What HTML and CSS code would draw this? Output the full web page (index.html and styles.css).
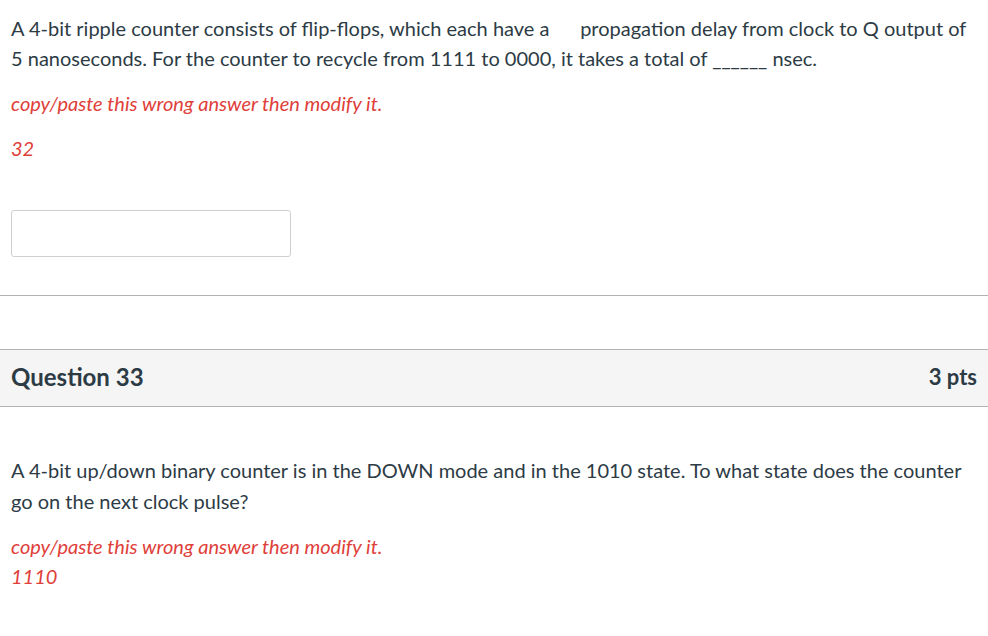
FILE: index.html
```html
<!DOCTYPE html>
<html>
<head>
<meta charset="utf-8">
<link rel="stylesheet" href="styles.css">
</head>
<body>
<div class="q-body first">
  <p class="text">A 4-bit ripple counter consists of flip-flops, which each have a&nbsp;&nbsp;&nbsp;&nbsp;&nbsp; propagation delay from clock to Q output of 5 nanoseconds. For the counter to recycle from 1111 to 0000, it takes a total of ______ nsec.</p>
  <p class="red">copy/paste this wrong answer then modify it.</p>
  <p class="red">32</p>
  <div class="answer-box"></div>
</div>
<div class="divider"></div>
<div class="q-header">
  <span class="q-title">Question 33</span>
  <span class="q-pts">3 pts</span>
</div>
<div class="q-body second">
  <p class="text">A 4-bit up/down binary counter is in the DOWN mode and in the 1010 state. To what state does the counter go on the next clock pulse?</p>
  <p class="red tight">copy/paste this wrong answer then modify it.<br>1110</p>
</div>
</body>
</html>
```

FILE: styles.css
```css
html, body {
  margin: 0;
  padding: 0;
  background: #fff;
}
body {
  font-family: Lato, "Open Sans", sans-serif;
  font-size: 20px;
  color: #2d3b45;
  width: 988px;
}
.q-body {
  padding: 0 11px;
}
.q-body.first {
  padding-top: 13px;
}
.text {
  margin: 0;
  line-height: 30px;
}
.red {
  margin: 15px 0 0;
  line-height: 30px;
  color: #e0403a;
  font-style: italic;
}
.answer-box {
  margin-top: 47px;
  width: 278px;
  height: 45px;
  border: 1px solid #cfcfcf;
  border-radius: 3px;
}
.divider {
  margin-top: 38px;
  height: 1px;
  background: #b3b3b3;
}
.q-header {
  margin-top: 53px;
  height: 53px;
  padding: 0 11px 3px;
  border-top: 1px solid #b3b3b3;
  border-bottom: 1px solid #b3b3b3;
  background: #f5f5f5;
  display: flex;
  align-items: center;
  justify-content: space-between;
}
.q-title {
  font-weight: 700;
  font-size: 24px;
  color: #2d3b45;
}
.q-pts {
  font-weight: 700;
  font-size: 22px;
  color: #2d3b45;
}
.q-body.second {
  padding-top: 48px;
}
.q-body.second .text {
  line-height: 31px;
}
.red.tight {
  margin-top: 14px;
}
```
